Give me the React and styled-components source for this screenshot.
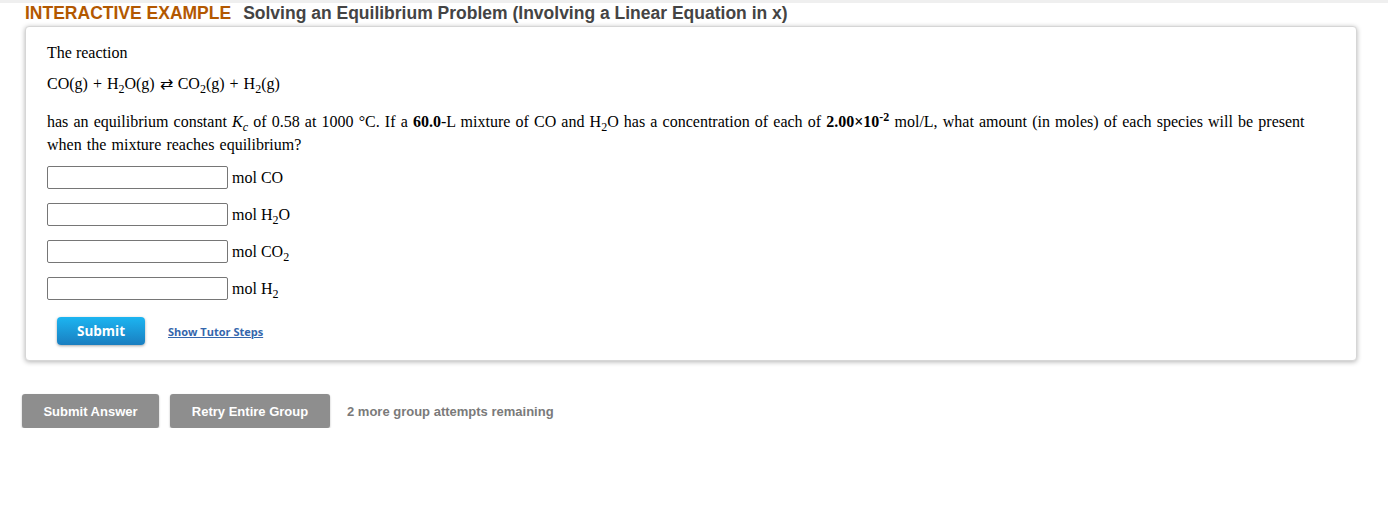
import styled, { createGlobalStyle } from "styled-components"

const GlobalStyle = createGlobalStyle`
  body {
    margin: 0;
    background: #ffffff;
    font-family: "Liberation Serif", "Times New Roman", serif;
  }
`

const answers = [
  { id: "co", label: <>mol CO</> },
  { id: "h2o", label: <>mol H<sub>2</sub>O</> },
  { id: "co2", label: <>mol CO<sub>2</sub></> },
  { id: "h2", label: <>mol H<sub>2</sub></> },
]

function AnswerRow({ label }) {
  return (
    <Row>
      <Input type="text" />
      <Unit>{label}</Unit>
    </Row>
  )
}

export default function App() {
  return (
    <>
      <GlobalStyle />
      <TopStrip />
      <Page>
        <Heading>
          <Tag>INTERACTIVE EXAMPLE</Tag>
          <HeadingText>Solving an Equilibrium Problem (Involving a Linear Equation in x)</HeadingText>
        </Heading>
        <Card>
          <Para>The reaction</Para>
          <Equation>
            CO(g) + H<sub>2</sub>O(g) &#8644; CO<sub>2</sub>(g) + H<sub>2</sub>(g)
          </Equation>
          <Question>
            has an equilibrium constant <i>K<sub>c</sub></i> of 0.58 at 1000 °C. If a <b>60.0</b>-L mixture of CO and H
            <sub>2</sub>O has a concentration of each of <b>2.00×10<sup>-2</sup></b> mol/L, what amount (in moles) of each
            species will be present when the mixture reaches equilibrium?
          </Question>
          <Answers>
            {answers.map((a) => (
              <AnswerRow key={a.id} label={a.label} />
            ))}
          </Answers>
          <Actions>
            <SubmitButton>Submit</SubmitButton>
            <TutorLink href="#">Show Tutor Steps</TutorLink>
          </Actions>
        </Card>
      </Page>
      <Footer>
        <GrayButton $width={137}>Submit Answer</GrayButton>
        <GrayButton $width={160}>Retry Entire Group</GrayButton>
        <Attempts>2 more group attempts remaining</Attempts>
      </Footer>
    </>
  )
}

const TopStrip = styled.div`
  height: 3px;
  background: #efefef;
`

const Page = styled.div`
  padding: 0 31px 0 25px;
`

const Heading = styled.h1`
  margin: 0;
  height: 23px;
  font-family: "Liberation Sans", Arial, sans-serif;
  font-size: 17.5px;
  line-height: 21px;
  font-weight: bold;
  white-space: nowrap;
`

const Tag = styled.span`
  color: #b35800;
  margin-right: 12px;
`

const HeadingText = styled.span`
  color: #444444;
`

const Card = styled.div`
  background: #ffffff;
  border: 1px solid #d6d6d6;
  border-radius: 4px;
  box-shadow: 0 1px 5px rgba(0, 0, 0, 0.3);
  padding: 14px 21px 15px 21px;
  font-size: 16px;
  color: #000000;

  sub,
  sup {
    font-size: 12px;
    line-height: 0;
  }

  sub {
    vertical-align: -4px;
  }

  sup {
    vertical-align: 6px;
  }
`

const Para = styled.p`
  margin: 0 0 8px;
  line-height: 23px;
`

const Equation = styled(Para)`
  margin-bottom: 15px;
  word-spacing: 1px;
`

const Question = styled(Para)`
  max-width: 1290px;
  margin-bottom: 0;
  word-spacing: 1.15px;
`

const Answers = styled.div`
  display: flex;
  flex-direction: column;
  gap: 14px;
  margin-top: 10px;
`

const Row = styled.div`
  display: flex;
  align-items: center;
  gap: 4px;
  height: 23px;
`

const Input = styled.input`
  box-sizing: border-box;
  width: 181px;
  height: 23px;
  margin: 0;
  border: 1px solid #767676;
  border-radius: 2px;
  background: #ffffff;
`

const Unit = styled.span`
  line-height: 23px;
`

const Actions = styled.div`
  display: flex;
  align-items: center;
  gap: 23px;
  margin: 17px 0 0 10px;
`

const SubmitButton = styled.button`
  width: 88px;
  height: 28px;
  border: none;
  border-radius: 4px;
  background: linear-gradient(#1cb5f1, #1a7ec0);
  box-shadow: 0 1px 3px rgba(0, 0, 0, 0.35);
  color: #ffffff;
  font-family: "Open Sans", Arial, sans-serif;
  font-size: 13.5px;
  font-weight: bold;
  cursor: pointer;
`

const TutorLink = styled.a`
  color: #3466ac;
  font-family: "Open Sans", Arial, sans-serif;
  font-size: 11px;
  font-weight: bold;
  text-decoration: underline;
`

const Footer = styled.div`
  display: flex;
  align-items: center;
  gap: 11px;
  margin: 33px 0 0 22px;
`

const GrayButton = styled.button`
  width: ${(p) => p.$width}px;
  height: 34px;
  border: none;
  border-radius: 3px;
  background: #8e8e8e;
  box-shadow: 0 1px 2px rgba(0, 0, 0, 0.3);
  color: #ffffff;
  font-family: "Liberation Sans", Arial, sans-serif;
  font-size: 13px;
  font-weight: bold;
`

const Attempts = styled.span`
  margin-left: 6px;
  color: #7a7a7a;
  font-family: "Liberation Sans", Arial, sans-serif;
  font-size: 13px;
  font-weight: bold;
`
